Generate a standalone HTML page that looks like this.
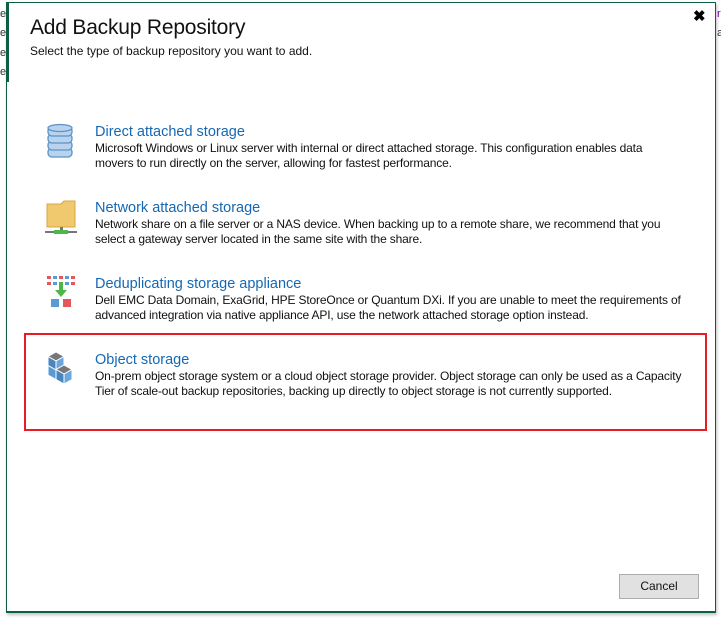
<!DOCTYPE html>
<html><head><style>
body{margin:0;width:721px;height:621px;background:#fff;position:relative;overflow:hidden;font-family:"Liberation Sans",sans-serif}
.bg{position:absolute;font-size:11px;color:#333}
.dlg{position:absolute;left:6px;top:2px;width:708px;height:608px;border:1px solid #0e5e45;border-width:1px 1px 2px 1px;background:#fff;box-shadow:1px 2px 3px rgba(0,0,0,.25)}
.bar{position:absolute;left:6px;top:2px;width:3px;height:80px;background:#0e5e45}
.t{position:absolute;left:30px;top:16px;font-size:21px;color:#111;letter-spacing:-0.2px}
.s{position:absolute;left:30px;top:44px;font-size:12px;color:#111}
.x{position:absolute;left:693px;top:7px;font-size:15px;font-weight:bold}
.it{position:absolute;left:95px;width:610px;white-space:nowrap}
.it h{display:block;font-size:14.5px;color:#1568b4;line-height:17px}
.it p{margin:0;font-size:12px;color:#111;line-height:15px;letter-spacing:-0.15px}
.red{position:absolute;left:24px;top:333px;width:679px;height:94px;border:2px solid #e81c24}
.btn{position:absolute;left:619px;top:574px;width:78px;height:23px;border:1px solid #adadad;background:#e1e1e1;font-size:12px;text-align:center;line-height:23px;color:#111}
</style></head><body>
<div class="bg" style="left:0;top:8px">e</div><div class="bg" style="left:0;top:27px">e</div><div class="bg" style="left:0;top:47px">e</div><div class="bg" style="left:0;top:66px">e</div>
<div class="bg" style="left:717px;top:8px;color:#70a">r</div><div class="bg" style="left:717px;top:27px">a</div>
<div class="dlg"></div><div class="bar"></div>
<div class="t">Add Backup Repository</div>
<div class="s">Select the type of backup repository you want to add.</div>
<div class="x">✖</div>
<svg style="position:absolute;left:46px;top:123px" width="30" height="36"><g fill="#b9d3ee" stroke="#5a93c8" stroke-width="1.3"><rect x="2" y="25" width="24" height="9" rx="4"/><rect x="2" y="18" width="24" height="9" rx="4"/><rect x="2" y="11" width="24" height="9" rx="4"/><rect x="2" y="4" width="24" height="9" rx="4"/><ellipse cx="14" cy="5" rx="12" ry="3.5"/></g></svg>
<div class="it" style="top:124px"><h>Direct attached storage</h><p>Microsoft Windows or Linux server with internal or direct attached storage. This configuration enables data<br>movers to run directly on the server, allowing for fastest performance.</p></div>
<svg style="position:absolute;left:44px;top:200px" width="34" height="34"><path d="M3 4h14l3-3h11v26H3z" fill="#f0c96e" stroke="#d9a740"/><rect x="16" y="27" width="3" height="4" fill="#777"/><rect x="1" y="31" width="32" height="2" fill="#777"/><rect x="10" y="30" width="14" height="4" fill="#4cb848"/></svg>
<div class="it" style="top:200px"><h>Network attached storage</h><p>Network share on a file server or a NAS device. When backing up to a remote share, we recommend that you<br>select a gateway server located in the same site with the share.</p></div>
<svg style="position:absolute;left:47px;top:276px" width="30" height="34"><g fill="#e5575a"><rect x="0" y="0" width="4" height="3"/><rect x="12" y="0" width="4" height="3"/><rect x="24" y="0" width="4" height="3"/><rect x="0" y="6" width="4" height="3"/><rect x="24" y="6" width="4" height="3"/><rect x="16" y="23" width="8" height="8"/></g><g fill="#5b9bd5"><rect x="6" y="0" width="4" height="3"/><rect x="18" y="0" width="4" height="3"/><rect x="6" y="6" width="4" height="3"/><rect x="18" y="6" width="4" height="3"/><rect x="4" y="23" width="8" height="8"/></g><path d="M12 6h4v8h4l-6 7-6-7h4z" fill="#4cb848"/></svg>
<div class="it" style="top:276px"><h>Deduplicating storage appliance</h><p>Dell EMC Data Domain, ExaGrid, HPE StoreOnce or Quantum DXi. If you are unable to meet the requirements of<br>advanced integration via native appliance API, use the network attached storage option instead.</p></div>
<svg style="position:absolute;left:47px;top:352px" width="28" height="36"><g stroke="#fff" stroke-width="1"><path d="M9 0l8 4.5-8 4.5-8-4.5z" fill="#777"/><path d="M1 4.5l8 4.5v9l-8-4.5z" fill="#4a86be"/><path d="M17 4.5l-8 4.5v9l8-4.5z" fill="#6aa7dc"/><path d="M17 13l8 4.5-8 4.5-8-4.5z" fill="#777"/><path d="M9 17.5l8 4.5v10l-8-4.5z" fill="#4a86be"/><path d="M25 17.5l-8 4.5v10l8-4.5z" fill="#6aa7dc"/><path d="M1 13.5l8 4.5v9.5l-8-4.5z" fill="#5b9bd5"/></g></svg>
<div class="it" style="top:352px"><h>Object storage</h><p>On-prem object storage system or a cloud object storage provider. Object storage can only be used as a Capacity<br>Tier of scale-out backup repositories, backing up directly to object storage is not currently supported.</p></div>
<div class="red"></div>
<div class="btn">Cancel</div>
</body></html>
